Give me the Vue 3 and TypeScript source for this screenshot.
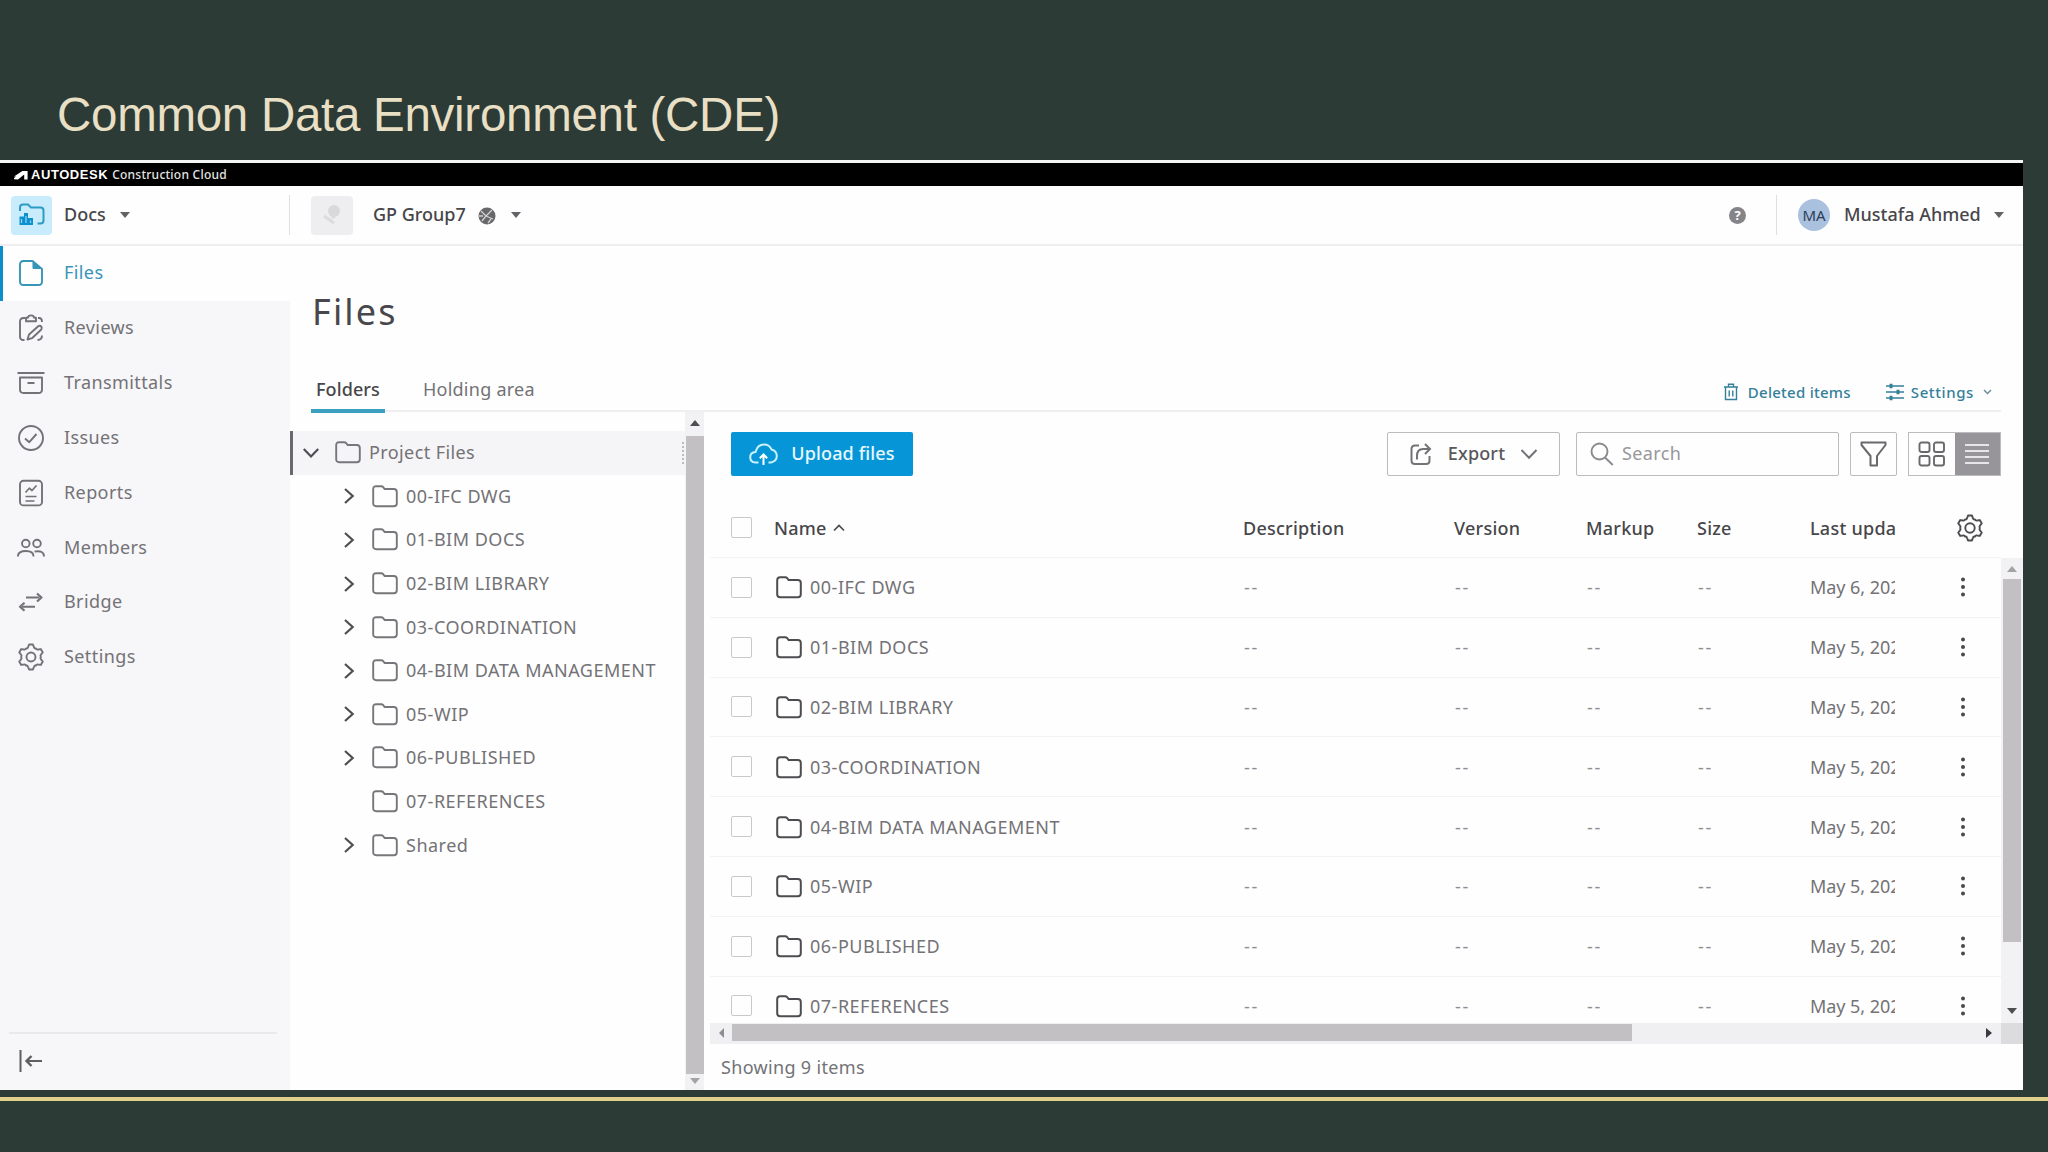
<script setup lang="ts">
interface NavItem { label: string; icon: string }
interface TreeItem { label: string; expandable: boolean }
interface FileRow { name: string; updated: string }

const nav: NavItem[] = [
  { label: 'Files', icon: 'file' },
  { label: 'Reviews', icon: 'review' },
  { label: 'Transmittals', icon: 'archive' },
  { label: 'Issues', icon: 'check' },
  { label: 'Reports', icon: 'report' },
  { label: 'Members', icon: 'members' },
  { label: 'Bridge', icon: 'bridge' },
  { label: 'Settings', icon: 'gear' },
]

const names = [
  '00-IFC DWG', '01-BIM DOCS', '02-BIM LIBRARY', '03-COORDINATION',
  '04-BIM DATA MANAGEMENT', '05-WIP', '06-PUBLISHED', '07-REFERENCES',
]
const tree: TreeItem[] = [
  ...names.map((label) => ({ label, expandable: label !== '07-REFERENCES' })),
  { label: 'Shared', expandable: true },
]
const rows: FileRow[] = names.map((name, i) => ({ name, updated: i === 0 ? 'May 6, 202' : 'May 5, 202' }))

const folderPath = 'M1.2 4.2Q1.2 1.2 4.2 1.2H9.2Q10.4 1.2 11.2 2.2L12.6 4H21.8Q24.8 4 24.8 7V18.2Q24.8 21.2 21.8 21.2H4.2Q1.2 21.2 1.2 18.2Z'

// Six-toothed gear outline centred on 14,14
function gear(): string {
  const pt = (r: number, deg: number) => {
    const a = (deg * Math.PI) / 180
    return `${(14 + r * Math.cos(a)).toFixed(2)} ${(14 + r * Math.sin(a)).toFixed(2)}`
  }
  let d = ''
  for (let k = 0; k < 6; k++) {
    const c = -90 + 60 * k
    d += `${k === 0 ? 'M' : 'L'}${pt(12.6, c - 9)}L${pt(12.6, c + 9)}L${pt(10.2, c + 17)}Q${pt(9, c + 22)} ${pt(9.9, c + 30)}Q${pt(9, c + 38)} ${pt(10.2, c + 43)}`
  }
  return d + 'Z'
}
const gearPath = gear()
</script>

<template>
  <div class="slide">
    <h1 class="slide-title">Common Data Environment (CDE)</h1>
    <div class="app">
      <div class="brand">
        <svg width="14" height="10" viewBox="0 0 14 10"><path d="M0 9.2V8L9.6 1H13.6V9.4H10.2V4.6L4 9.4ZM0 6.6L8.4 1H9.6L3 6.4Z" fill="#fff" /></svg>
        <b>AUTODESK</b><span>Construction Cloud</span>
      </div>

      <header class="topbar">
        <div class="product">
          <div class="product-icon">
            <svg width="30" height="28" viewBox="0 0 30 28" fill="none">
              <path d="M3 10V6.500Q3 3.500 6 3.500H11L14 6.500H23.500Q26.500 6.500 26.500 9.500V19.500Q26.500 22.500 23.500 22.500H20.500" stroke="#2c9cc4" stroke-width="2" />
              <path d="M2.500 24V15.500H7V12H11V17H16V24Z" fill="#0e8fce" />
              <path d="M4.500 18V22M9 15V22M13.500 19.500V22" stroke="#8fd6f4" stroke-width="1.200" />
            </svg>
          </div>
          <span class="strong">Docs</span>
          <i class="caret"></i>
        </div>
        <div class="project">
          <div class="thumb">
            <svg width="22" height="22" viewBox="0 0 22 22"><circle cx="13" cy="7" r="6" fill="#d9d8db" /><path d="M9 7Q8 12 15 13L11 15Z" fill="#d9d8db" /><path d="M3 12L13 19" stroke="#dcdbde" stroke-width="3" /></svg>
          </div>
          <span class="strong">GP Group7</span>
          <svg class="globe" width="18" height="18" viewBox="0 0 18 18"><circle cx="9" cy="9" r="8.500" fill="#68676a" /><path d="M3 4L8 9L14 3M8 9L4 14M8 9L15 12M1 9H5M10 16L13 12" fill="none" stroke="#cfced1" stroke-width="1.300" /></svg>
          <i class="caret"></i>
        </div>
        <div class="account">
          <div class="help">?</div>
          <div class="user">
            <div class="avatar">MA</div>
            <span class="strong">Mustafa Ahmed</span>
            <i class="caret"></i>
          </div>
        </div>
      </header>

      <div class="body">
        <aside class="side">
          <nav>
            <div v-for="(item, i) in nav" :key="item.label" class="nav-item" :class="{ active: i === 0 }">
              <svg width="28" height="28" viewBox="0 0 28 28" fill="none" stroke="currentColor" stroke-width="1.900" stroke-linejoin="round">
                <template v-if="item.icon === 'file'">
                  <path d="M15.500 2H6.500Q3 2 3 5.500V22.500Q3 26 6.500 26H21.500Q25 26 25 22.500V10Z" />
                  <path d="M16 2.500V9.500H24.500Z" fill="currentColor" stroke-width="1" />
                </template>
                <template v-else-if="item.icon === 'review'">
                  <path d="M8 4H6.500Q3 4 3 7.500V22.500Q3 26 6.500 26H7.500M21 4H22Q25 4 25 8M20.500 26Q25 26 25 21.500" />
                  <path d="M9 3.800H10.800Q11.200 1.400 14 1.400T17.200 3.800H19V7.200H9Z" />
                  <path d="M10.500 25.500L12 20.500L21.500 12Q23 11.200 24.200 12.500T24.300 15.500L15 24.200Z" />
                </template>
                <template v-else-if="item.icon === 'archive'">
                  <path d="M0.500 4H27.500M3 8.500H25V20.500Q25 24 21.500 24H6.500Q3 24 3 20.500ZM10.500 14H17.500" />
                </template>
                <template v-else-if="item.icon === 'check'">
                  <circle cx="14" cy="14" r="12" /><path d="M8 14.500L12.300 18.200L19.500 10" />
                </template>
                <template v-else-if="item.icon === 'report'">
                  <rect x="3" y="1.800" width="22" height="24.600" rx="3.500" /><path d="M8.500 13.500L12.300 9.200L15 11.500L19.500 6.500M8.500 17.500H19.500M8.500 22H17.500" stroke-width="1.700" />
                </template>
                <template v-else-if="item.icon === 'members'">
                  <circle cx="8.800" cy="9.500" r="3.800" /><circle cx="20" cy="9.500" r="3.800" /><path d="M0.900 22.500Q0.900 17 8.800 17T16.500 22.500M17.500 17.600Q27 16 27 22.500" />
                </template>
                <template v-else-if="item.icon === 'bridge'">
                  <path d="M9 9.500H22.500M18 18.800H5" /><path d="M20 5.500L24.500 9.500L20 13.500M7.500 14.800L3 18.800L7.500 22.800" stroke-width="2.200" />
                </template>
                <template v-else>
                  <path :d="gearPath" /><circle cx="14" cy="14" r="4.500" />
                </template>
              </svg>
              <span>{{ item.label }}</span>
            </div>
          </nav>
          <div class="collapse">
            <svg width="24" height="24" viewBox="0 0 24 24" fill="none" stroke="#5f5e61" stroke-width="2"><path d="M1.500 1V23M7 12H23" /><path d="M12.500 7L7.500 12L12.500 17" stroke-width="2.400" /></svg>
          </div>
        </aside>

        <main class="main">
          <h2>Files</h2>
          <div class="tabs">
            <div class="tab on">Folders</div>
            <div class="tab">Holding area</div>
            <div class="tools">
              <svg width="14" height="18" viewBox="0 0 14 18" fill="none" stroke="#34809a" stroke-width="1.400"><path d="M0 4H14M4.500 3.500V1.200H9.500V3.500M1.500 4.500V16.500H12.500V4.500M5.200 7.500V13.500M8.800 7.500V13.500" /></svg>
              <span class="deleted">Deleted items</span>
              <svg width="18" height="18" viewBox="0 0 18 18" fill="none" stroke="#34809a" stroke-width="1.500"><path d="M0 3H18M0 9H18M0 15H18" /><path d="M5 .8V5.200M12 6.800V11.200M5 12.800V17.200" stroke-width="3" /></svg>
              <span class="tool-settings">Settings</span>
              <svg width="9" height="6" viewBox="0 0 9 6" fill="none" stroke="#6b8d99" stroke-width="1.500"><path d="M1 1L4.500 4.500L8 1" /></svg>
            </div>
          </div>

          <div class="panes">
            <section class="tree">
              <div class="tree-list">
                <div class="node root">
                  <svg class="chev" width="18" height="12" viewBox="0 0 18 12" fill="none" stroke="#4f4e52" stroke-width="2.200"><path d="M1.800 2L9 9.500L16.200 2" /></svg>
                  <svg class="folder" width="26" height="23" viewBox="0 0 26 23" fill="none" stroke="#77767a" stroke-width="1.900"><path :d="folderPath" /></svg>
                  <span>Project Files</span>
                  <i class="grip"></i>
                </div>
                <div v-for="t in tree" :key="t.label" class="node child">
                  <svg class="chev" width="12" height="18" viewBox="0 0 12 18" fill="none" stroke="#4f4e52" stroke-width="2.200"><path v-if="t.expandable" d="M2 2L9.700 9L2 16" /></svg>
                  <svg class="folder" width="26" height="23" viewBox="0 0 26 23" fill="none" stroke="#77767a" stroke-width="1.900"><path :d="folderPath" /></svg>
                  <span>{{ t.label }}</span>
                </div>
              </div>
              <div class="vbar tree-bar"><i class="up dark"></i><div class="thumb-v"></div><i class="down"></i></div>
            </section>

            <section class="content">
              <div class="actions">
                <button class="upload">
                  <svg width="29" height="23" viewBox="0 0 29 23" fill="none" stroke="#c9f1ff" stroke-width="2"><path d="M9.500 19.500H6.500Q1.200 19 1.200 14.200T6.500 9Q8.500 1.500 15 1.500Q20.500 1.500 22.500 6.500Q27.800 8 27.800 13T22 19.500H19.500" /><path d="M14.500 22V12M10.800 15.200L14.500 11.500L18.200 15.200" stroke="#fff" /></svg>
                  <span>Upload files</span>
                </button>
                <button class="export">
                  <svg width="24" height="24" viewBox="0 0 24 24" fill="none" stroke="#737276" stroke-width="2"><path d="M10 3.500H6Q2.500 3.500 2.500 7V18.500Q2.500 22 6 22H17Q20.500 22 20.500 18.500V14" /><path d="M8 17.500V14Q8 7 14 7H20M16 2L21 7L16 12" /></svg>
                  <span>Export</span>
                  <svg width="18" height="12" viewBox="0 0 18 12" fill="none" stroke="#737276" stroke-width="2"><path d="M1.500 2L9 9.800L16.500 2" /></svg>
                </button>
                <div class="search">
                  <svg width="24" height="24" viewBox="0 0 24 24" fill="none" stroke="#8a898d" stroke-width="1.900"><circle cx="9.500" cy="9.500" r="8" /><path d="M15 15.500L22.800 23" /></svg>
                  <span>Search</span>
                </div>
                <button class="filter">
                  <svg width="27" height="26" viewBox="0 0 27 26" fill="none" stroke="#69686c" stroke-width="2" stroke-linejoin="round"><path d="M1.500 1.500H25.500V4L17 15V24.500H10.500V15L1.500 4Z" /></svg>
                </button>
                <div class="toggle">
                  <button>
                    <svg width="28" height="26" viewBox="0 0 28 26" fill="none" stroke="#69686c" stroke-width="1.900"><rect x="1.500" y="1.500" width="10" height="9.500" rx="2" /><rect x="16" y="1.500" width="10" height="9.500" rx="2" /><rect x="1.500" y="15" width="10" height="9.500" rx="2" /><rect x="16" y="15" width="10" height="9.500" rx="2" /></svg>
                  </button>
                  <button class="on">
                    <svg width="24" height="22" viewBox="0 0 24 22" stroke="#e6e5e8" stroke-width="2.200"><path d="M0 2H24M0 8H24M0 14H24M0 20H24" /></svg>
                  </button>
                </div>
              </div>

              <div class="grid-row head">
                <i class="box"></i>
                <div class="name">Name<svg width="12" height="8" viewBox="0 0 12 8" fill="none" stroke="#4b4a4d" stroke-width="1.700"><path d="M1 6.500L6 1.500L11 6.500" /></svg></div>
                <span>Description</span><span>Version</span><span>Markup</span><span>Size</span><span>Last upda</span>
                <svg class="cog" width="28" height="28" viewBox="0 0 28 28" fill="none" stroke="#4d4c50" stroke-width="1.900" stroke-linejoin="round"><path :d="gearPath" /><circle cx="14" cy="14" r="4.700" /></svg>
              </div>

              <div class="table-area">
                <div class="rows">
                  <div v-for="r in rows" :key="r.name" class="grid-row">
                    <i class="box"></i>
                    <div class="name">
                      <svg class="folder" width="26" height="23" viewBox="0 0 26 23" fill="none" stroke="#4d4c50" stroke-width="2"><path :d="folderPath" /></svg>
                      {{ r.name }}
                    </div>
                    <span class="dash">--</span><span class="dash">--</span><span class="dash">--</span><span class="dash">--</span>
                    <span class="date">{{ r.updated }}</span>
                    <svg class="more" width="6" height="20" viewBox="0 0 6 20" fill="#49484c"><circle cx="3" cy="2.500" r="2" /><circle cx="3" cy="10" r="2" /><circle cx="3" cy="17.500" r="2" /></svg>
                  </div>
                </div>
                <div class="vbar table-bar"><i class="up"></i><div class="thumb-v"></div><i class="down dark"></i></div>
              </div>
              <div class="hbar"><div class="track"><i class="left"></i><div class="thumb-h"></div><i class="right"></i></div><div class="corner"></div></div>
              <footer>Showing 9 items</footer>
            </section>
          </div>
        </main>
      </div>
    </div>
    <div class="rule"></div>
  </div>
</template>

<style>
body { margin: 0; background: #2c3b36; }
</style>

<style scoped>
* { box-sizing: border-box; }
svg { display: block; flex: none; }
button { padding: 0; margin: 0; font: inherit; color: inherit; letter-spacing: inherit; background: none; }
.slide { width: 2048px; height: 1152px; overflow: hidden; background: #2c3b36; font-family: "Noto Sans", sans-serif; display: flex; flex-direction: column; }
.slide-title { margin: 0; height: 160px; flex: none; padding: 86px 0 0 57px; font: 400 47.500px/58px "Liberation Sans", Arial, sans-serif; color: #e8dfc4; white-space: nowrap; letter-spacing: -.28px; }
.app { width: 2023px; height: 930px; flex: none; background: #fefefe; border-top: 3px solid #f4f6f5; display: flex; flex-direction: column; font-size: 18px; color: #737276; letter-spacing: .4px; white-space: nowrap; }
.rule { height: 4px; margin-top: 7px; background: #dfd08c; flex: none; }

.brand { height: 23px; background: #000; color: #e4e4e4; display: flex; align-items: center; padding-left: 14px; font-size: 12px; font-weight: 500; flex: none; line-height: 22px; letter-spacing: .25px; }
.brand b { font-family: "Liberation Sans", Arial, sans-serif; font-size: 13px; margin: 0 4px 0 3px; color: #fff; letter-spacing: .55px; }

.topbar { height: 60px; border-bottom: 2px solid #efeef1; display: flex; align-items: center; flex: none; }
.strong { font-weight: 500; color: #47464a; letter-spacing: 0; padding-bottom: 2px; }
.caret { border: 5px solid transparent; border-top: 6px solid #636266; border-bottom: 0; }
.product { width: 290px; height: 40px; border-right: 1px solid #dfdee1; display: flex; align-items: center; padding-left: 11px; }
.product-icon { width: 41px; height: 39px; border-radius: 4px; background: #c8ecfb; display: flex; align-items: center; justify-content: center; margin-right: 12px; }
.product .caret { margin-left: 14px; }
.project { display: flex; align-items: center; padding-left: 21px; }
.thumb { width: 42px; height: 39px; border-radius: 4px; background: #eeedf0; display: flex; align-items: center; justify-content: center; margin-right: 20px; }
.globe { margin: 2px 15px 0 12px; }
.account { margin-left: auto; display: flex; align-items: center; }
.help { width: 17px; height: 17px; border-radius: 50%; background: #858488; color: #fff; font-size: 13px; font-weight: 700; line-height: 17px; text-align: center; letter-spacing: 0; margin: 1px 30px 0 0; }
.user { height: 40px; width: 247px; border-left: 1px solid #dfdee1; display: flex; align-items: center; padding-left: 21px; }
.avatar { width: 32px; height: 32px; border-radius: 50%; background: #a9c0df; color: #2f3e58; font-size: 15px; line-height: 32px; text-align: center; letter-spacing: 0; margin-right: 14px; }
.user .caret { margin-left: 13px; }

.body { flex: 1; min-height: 0; display: flex; }
.side { width: 290px; background: #f7f6f9; display: flex; flex-direction: column; justify-content: space-between; }
.nav-item { height: 54.850px; display: flex; align-items: center; padding-left: 17px; gap: 19px; }
.nav-item span { padding-bottom: 2px; }
.nav-item.active { background: #fefefe; color: #3795b8; border-left: 3px solid #0b8fc9; padding-left: 14px; }
.collapse { height: 58px; margin: 0 13px 0 9px; border-top: 2px solid #e9e8eb; padding: 15px 0 0 10px; }

.main { flex: 1; min-width: 0; display: flex; flex-direction: column; }
h2 { margin: 0; height: 123px; padding: 40px 0 0 22px; font-size: 36px; font-weight: 400; line-height: 52px; color: #48474b; letter-spacing: 2.200px; }
.tabs { height: 43px; flex: none; margin: 0 22px 0 21px; border-bottom: 2px solid #efeef1; display: flex; align-items: flex-start; line-height: 40px; }
.tab { height: 44px; padding: 0 5px; margin-right: 33px; letter-spacing: .25px; }
.tab.on { font-weight: 500; color: #47464a; border-bottom: 4px solid #3ba0bf; letter-spacing: .1px; }
.tools { margin-left: auto; height: 40px; padding-top: 6px; display: flex; align-items: center; font-size: 15px; font-weight: 500; color: #34809a; padding-right: 9px; }
.deleted { margin: 0 35px 0 10px; letter-spacing: .25px; }
.tool-settings { margin: 0 9px 0 7px; letter-spacing: .6px; }

.panes { flex: 1; min-height: 0; display: flex; }
.tree { width: 414px; display: flex; flex: none; }
.tree-list { flex: 1; padding-top: 19px; }
.node { height: 43.600px; display: flex; align-items: center; }
.node span { padding-bottom: 1px; }
.node.root { background: #f5f4f7; border-left: 3px solid #69686c; padding-left: 9px; position: relative; }
.root .chev { margin-right: 15px; }
.root span { margin-left: 8px; }
.node.child { padding-left: 53px; }
.child .chev { margin-right: 17px; }
.child span { margin-left: 8px; letter-spacing: .5px; }
.grip { position: absolute; right: 1px; top: 11px; height: 22px; border-left: 2px dotted #bbbabe; }
.vbar { background: #f2f1f4; display: flex; flex-direction: column; align-items: center; }
.thumb-v { background: #c2c0c3; }
.up { border: 5px solid transparent; border-bottom: 6px solid #a3a2a5; border-top: 0; }
.down { border: 5px solid transparent; border-top: 6px solid #a3a2a5; border-bottom: 0; }
.up.dark { border-bottom-color: #4e4d51; }
.down.dark { border-top-color: #4e4d51; }
.tree-bar { width: 19px; padding: 8px 0 4px; justify-content: space-between; }
.tree-bar .thumb-v { width: 18px; height: 638px; margin: 5px 0 0; }
.tree-bar .down { margin-bottom: 2px; }

.content { flex: 1; min-width: 0; display: flex; flex-direction: column; padding-left: 6px; }
.actions { height: 64px; padding: 20px 22px 0 21px; display: flex; flex: none; }
.actions button { border: 0; height: 44px; display: flex; align-items: center; justify-content: center; }
.actions span { padding-bottom: 2px; }
.actions .upload { width: 182px; background: #0696d7; border-radius: 2px; color: #e9f9ff; font-weight: 500; gap: 13px; letter-spacing: .15px; }
.actions .export { width: 173px; margin-left: auto; border: 1px solid #bcbbbf; border-radius: 2px; font-weight: 500; color: #59585c; gap: 15px; letter-spacing: .15px; }
.search { width: 263px; height: 44px; margin: 0 11px 0 16px; border: 1px solid #bcbbbf; border-radius: 2px; display: flex; align-items: center; padding-left: 13px; gap: 8px; color: #98979b; }
.actions .filter { width: 47px; border: 1px solid #bcbbbf; border-radius: 2px; margin-right: 11px; }
.toggle { width: 93px; display: flex; border: 1px solid #bcbbbf; height: 44px; }
.actions .toggle button { flex: 1; height: 42px; }
.actions .toggle .on { background: #979599; }

.grid-row { height: 59.800px; display: grid; grid-template-columns: 43px 469px 211px 132px 111px 113px 85px auto; align-items: center; padding-left: 21px; border-bottom: 1px solid #f3f2f5; }
.head { height: 82px; flex: none; margin: 0 22px 0 0; padding-top: 22px; font-weight: 500; color: #47464a; letter-spacing: .25px; }
.box { width: 21px; height: 21px; border: 1px solid #c9c8cc; border-radius: 2px; }
.name { display: flex; align-items: center; }
.head .name svg { margin-left: 6px; }
.rows .name svg { margin: 1px 8px 0 2px; }
.rows .name { letter-spacing: .5px; }
.dash { color: #8f8e92; letter-spacing: 1.800px; padding-left: 1px; }
.date { overflow: hidden; letter-spacing: -.05px; }
.cog { margin-left: 61px; }
.more { margin-left: 65px; }
.table-area { height: 465px; overflow: hidden; display: flex; flex: none; }
.rows { flex: 1; min-width: 0; }
.table-bar { width: 22px; padding: 8px 0 9px; }
.table-bar .thumb-v { width: 18px; height: 363px; margin: 7px 0 auto; }
.hbar { height: 21px; display: flex; flex: none; }
.track { flex: 1; background: #f0eff2; display: flex; align-items: center; padding: 0 9px 2px; }
.thumb-h { width: 900px; height: 17px; background: #c2c0c3; margin-left: 8px; }
.left { border: 5px solid transparent; border-right: 5px solid #8e8d91; border-left: 0; }
.right { margin-left: auto; border: 5px solid transparent; border-left: 6px solid #3b3a3e; border-right: 0; }
.corner { width: 22px; background: #dcdcde; }
footer { padding-left: 11px; line-height: 46px; height: 47px; letter-spacing: .33px; }
</style>
